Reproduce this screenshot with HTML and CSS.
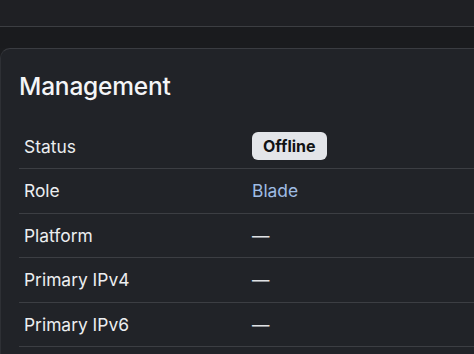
FILE: index.html
```html
<!DOCTYPE html>
<html>
<head>
<meta charset="utf-8">
<link rel="stylesheet" href="styles.css">
</head>
<body>
<div class="topbar"></div>
<div class="band"></div>
<section class="card">
  <h2 class="title">Management</h2>
  <div class="table">
    <div class="row"><div class="label">Status</div><div class="value"><span class="badge">Offline</span></div></div>
    <div class="row"><div class="label">Role</div><div class="value link">Blade</div></div>
    <div class="row"><div class="label">Platform</div><div class="value">—</div></div>
    <div class="row"><div class="label">Primary IPv4</div><div class="value">—</div></div>
    <div class="row"><div class="label">Primary IPv6</div><div class="value">—</div></div>
  </div>
</section>
</body>
</html>
```
FILE: styles.css
```css
html, body {
  margin: 0;
  padding: 0;
  background: #1b1c1f;
  font-family: Inter, "Noto Sans", sans-serif;
  color: #e8e9eb;
  overflow: hidden;
}
.topbar {
  height: 26px;
  background: #1f2024;
  border-bottom: 1px solid #3c3e42;
}
.band {
  height: 21px;
  background: #1a1b1e;
}
.card {
  box-sizing: border-box;
  height: calc(100vh - 48px);
  overflow: hidden;
  background: #212328;
  border-top: 1px solid #3a3c41;
  border-left: 1px solid #2e3035;
  border-top-left-radius: 10px;
  padding: 22px 0 0 18px;
}
.title {
  margin: 0 0 23.5px 0;
  font-size: 24.5px;
  line-height: 30px;
  font-weight: 500;
  color: #f4f5f7;
  letter-spacing: -0.2px;
}
.row {
  display: flex;
  align-items: center;
  height: 43.5px;
  border-bottom: 1px solid #3c3e43;
  font-size: 17.4px;
}
.label {
  width: 228px;
  padding-left: 5px;
  color: #eceef0;
}
.value {
  color: #e0e2e5;
}
.link {
  color: #9fbce4;
}
.badge {
  display: inline-block;
  background: #e3e5e9;
  color: #111214;
  font-weight: 700;
  font-size: 16px;
  line-height: 28px;
  padding: 0 11px;
  border-radius: 6px;
}
```
